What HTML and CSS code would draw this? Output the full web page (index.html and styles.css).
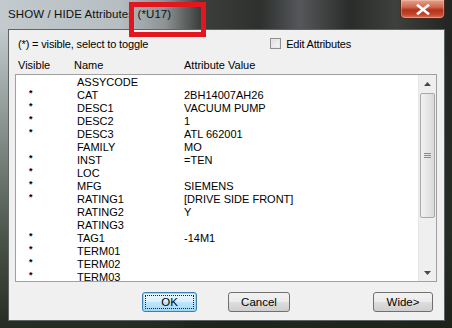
FILE: index.html
```html
<!DOCTYPE html>
<html>
<head>
<meta charset="utf-8">
<link rel="stylesheet" href="styles.css">
</head>
<body>
<div class="window">
  <div class="titlebar">
    <span class="title">SHOW / HIDE Attributes (*U17)</span>
    <div class="close"><svg width="14" height="11" viewBox="0 0 14 11"><path d="M2 1.5 L12 9.5 M12 1.5 L2 9.5" stroke="#fff" stroke-width="2.6" stroke-linecap="square"/></svg></div>
  </div>
  <div class="frame">
    <div class="client">
      <div class="toprow">
        <span class="hint">(*) = visible, select to toggle</span>
        <label class="edit"><span class="checkbox"></span>Edit Attributes</label>
      </div>
      <div class="headers">
        <span class="c1">Visible</span><span class="c2">Name</span><span class="c3">Attribute Value</span>
      </div>
      <div class="listbox">
        <div class="rows">
          <div class="row"><span class="c1"></span><span class="c2">ASSYCODE</span><span class="c3"></span></div>
          <div class="row"><span class="c1">*</span><span class="c2">CAT</span><span class="c3">2BH14007AH26</span></div>
          <div class="row"><span class="c1">*</span><span class="c2">DESC1</span><span class="c3">VACUUM PUMP</span></div>
          <div class="row"><span class="c1">*</span><span class="c2">DESC2</span><span class="c3">1</span></div>
          <div class="row"><span class="c1">*</span><span class="c2">DESC3</span><span class="c3">ATL 662001</span></div>
          <div class="row"><span class="c1"></span><span class="c2">FAMILY</span><span class="c3">MO</span></div>
          <div class="row"><span class="c1">*</span><span class="c2">INST</span><span class="c3">=TEN</span></div>
          <div class="row"><span class="c1">*</span><span class="c2">LOC</span><span class="c3"></span></div>
          <div class="row"><span class="c1">*</span><span class="c2">MFG</span><span class="c3">SIEMENS</span></div>
          <div class="row"><span class="c1">*</span><span class="c2">RATING1</span><span class="c3">[DRIVE SIDE FRONT]</span></div>
          <div class="row"><span class="c1"></span><span class="c2">RATING2</span><span class="c3">Y</span></div>
          <div class="row"><span class="c1"></span><span class="c2">RATING3</span><span class="c3"></span></div>
          <div class="row"><span class="c1">*</span><span class="c2">TAG1</span><span class="c3">-14M1</span></div>
          <div class="row"><span class="c1">*</span><span class="c2">TERM01</span><span class="c3"></span></div>
          <div class="row"><span class="c1">*</span><span class="c2">TERM02</span><span class="c3"></span></div>
          <div class="row"><span class="c1">*</span><span class="c2">TERM03</span><span class="c3"></span></div>
        </div>
        <div class="scrollbar">
          <div class="arrow"><svg width="7" height="4" viewBox="0 0 7 4"><path d="M0 4 L3.5 0 L7 4 Z" fill="#4a4a4a"/></svg></div>
          <div class="track">
            <div class="thumb"><svg width="7" height="6" viewBox="0 0 7 6"><path d="M0 0.5 H7 M0 2.5 H7 M0 4.5 H7" stroke="#8a8a8a" stroke-width="1"/></svg></div>
          </div>
          <div class="arrow"><svg width="7" height="4" viewBox="0 0 7 4"><path d="M0 0 L3.5 4 L7 0 Z" fill="#4a4a4a"/></svg></div>
        </div>
      </div>
      <div class="buttons">
        <button class="btn ok">OK</button>
        <button class="btn cancel">Cancel</button>
        <button class="btn wide">Wide&gt;</button>
      </div>
    </div>
  </div>
  <div class="annotation"></div>
</div>
</body>
</html>
```

FILE: styles.css
```css
html, body {
  margin: 0;
  padding: 0;
  width: 452px;
  height: 328px;
  overflow: hidden;
  background: #1c1e1b;
}
.window {
  position: relative;
  width: 452px;
  height: 328px;
  display: flex;
  flex-direction: column;
  background:
    linear-gradient(90deg, #c3cacd 0px, #b6bec2 120px, #8d9394 165px, #3c3f3c 200px, #2d302d 260px, #55575a 300px, #2a2c2a 350px, #3e403d 395px, #222421 452px);
  font-family: "Liberation Sans", Arial, sans-serif;
}
.titlebar {
  height: 29px;
  flex: none;
  display: flex;
  align-items: flex-start;
  justify-content: space-between;
}
.title {
  font-family: "Liberation Sans", Arial, sans-serif;
  font-size: 11.5px;
  color: #111;
  margin: 8px 0 0 8px;
  letter-spacing: 0.1px;
}
.close {
  width: 45px;
  height: 19px;
  margin-right: 7px;
  box-sizing: border-box;
  border: 1px solid #4b2a22;
  border-top: none;
  border-radius: 0 0 5px 5px;
  background: linear-gradient(#e6a28f 0%, #d1664b 40%, #b2321b 55%, #c3452b 80%, #d8775b 100%);
  display: flex;
  align-items: center;
  justify-content: center;
  box-shadow: inset 0 0 0 1px rgba(255,220,200,0.35);
}
.frame {
  flex: 1;
  display: flex;
  padding: 0 7px 7px 8px;
  background: linear-gradient(180deg, rgba(0,0,0,0) 0px, rgba(40,50,35,0.75) 200px, rgba(30,35,25,0.95) 299px);
}
.client {
  flex: 1;
  background: #f0f0f0;
  border: 1px solid #5d6466;
  display: flex;
  flex-direction: column;
  font-size: 11px;
  color: #000;
  position: relative;
}
.toprow {
  height: 23px;
  display: flex;
  align-items: center;
  padding: 2px 0 0 9px;
}
.hint { flex: none; letter-spacing: -0.15px; }
.edit {
  margin-left: auto;
  margin-right: 93px;
  display: flex;
  align-items: center;
  letter-spacing: -0.2px;
}
.checkbox {
  width: 11px;
  height: 11px;
  box-sizing: border-box;
  border: 1px solid #8f8f8f;
  background: linear-gradient(135deg, #dcdcdc, #f8f8f8);
  box-shadow: inset 0 0 0 1px #e8e8e8;
  margin-right: 5px;
}
.headers {
  height: 19px;
  display: flex;
  align-items: center;
  padding-left: 9px;
}
.headers .c1 { width: 56px; }
.headers .c2 { width: 110px; }
.listbox {
  margin: 0 7px 0 6px;
  height: 208px;
  box-sizing: border-box;
  border: 1px solid #a0a0a0;
  background: #fff;
  display: flex;
}
.rows {
  flex: 1;
  padding-top: 1px;
}
.row {
  height: 13px;
  line-height: 13px;
  display: flex;
  font-size: 11px;
}
.row .c1 {
  width: 61px;
  padding-left: 13px;
  box-sizing: border-box;
  font-size: 9px;
  font-weight: bold;
  line-height: 9px;
}
.row .c2 { width: 107px; }
.scrollbar {
  width: 17px;
  display: flex;
  flex-direction: column;
  background: #efefef;
  border-left: 1px solid #e6e6e6;
}
.arrow {
  height: 17px;
  display: flex;
  align-items: center;
  justify-content: center;
}
.track {
  flex: 1;
  padding-top: 1px;
}
.thumb {
  height: 125px;
  margin: 0 1px;
  box-sizing: border-box;
  border: 1px solid #a8a8a8;
  border-radius: 2px;
  background: linear-gradient(90deg, #f2f2f2, #e6e6e6 50%, #dadada);
  display: flex;
  align-items: center;
  justify-content: center;
}
.buttons {
  flex: 1;
  display: flex;
  align-items: flex-start;
  padding-top: 10px;
}
.btn {
  height: 20px;
  box-sizing: border-box;
  border: 1px solid #707070;
  border-radius: 3px;
  background: linear-gradient(#f2f2f2 0%, #ebebeb 49%, #dddddd 50%, #cfcfcf 100%);
  font-family: "Liberation Sans", Arial, sans-serif;
  font-size: 11.5px;
  color: #000;
  padding: 0;
}
.ok {
  width: 55px;
  margin-left: 133px;
  border-color: #3c7fb1;
  box-shadow: inset 0 0 0 1px #9fd6f5;
  background: linear-gradient(#eaf6fd 0%, #d9f0fc 49%, #bee6fd 50%, #a7d9f5 100%);
  outline: 1px dotted #222;
  outline-offset: -4px;
}
.cancel { width: 62px; margin-left: 31px; }
.wide { width: 60px; margin-left: 83px; }
.annotation {
  position: absolute;
  left: 129px;
  top: 2px;
  width: 77px;
  height: 35px;
  box-sizing: border-box;
  border: 5px solid #e3161f;
}
```
